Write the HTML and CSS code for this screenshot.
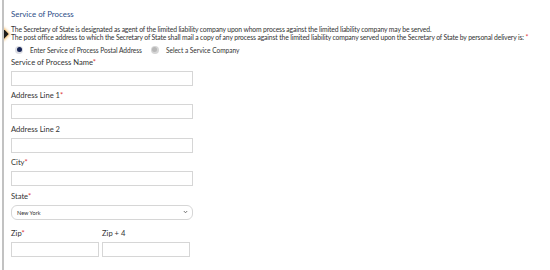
FILE: index.html
```html
<!DOCTYPE html>
<html>
<head>
<meta charset="utf-8">
<link rel="stylesheet" href="styles.css">
</head>
<body>
<div class="page">
  <div class="marker"></div>
  <section class="content">
    <h2 class="title">Service of Process</h2>
    <p class="desc">The Secretary of State is designated as agent of the limited liability company upon whom process against the limited liability company may be served.<br>The post office address to which the Secretary of State shall mail a copy of any process against the limited liability company served upon the Secretary of State by personal delivery is: <span class="req">*</span></p>
    <div class="radios">
      <label class="radio"><span class="dot on"></span>Enter Service of Process Postal Address</label>
      <label class="radio"><span class="dot"></span>Select a Service Company</label>
    </div>
    <div class="field">
      <div class="label">Service of Process Name<span class="req">*</span></div>
      <div class="input"></div>
    </div>
    <div class="field">
      <div class="label">Address Line 1<span class="req">*</span></div>
      <div class="input"></div>
    </div>
    <div class="field">
      <div class="label">Address Line 2</div>
      <div class="input"></div>
    </div>
    <div class="field">
      <div class="label">City<span class="req">*</span></div>
      <div class="input"></div>
    </div>
    <div class="field">
      <div class="label">State<span class="req">*</span></div>
      <div class="select"><span>New York</span>
        <svg width="5" height="4" viewBox="0 0 5 4"><path d="M0.8 1 L2.5 2.8 L4.2 1" fill="none" stroke="#555" stroke-width="0.8"/></svg>
      </div>
    </div>
    <div class="zips">
      <div class="field zip">
        <div class="label">Zip<span class="req">*</span></div>
        <div class="input"></div>
      </div>
      <div class="field zip">
        <div class="label">Zip + 4</div>
        <div class="input"></div>
      </div>
    </div>
  </section>
</div>
</body>
</html>
```
FILE: styles.css
```css
* { box-sizing: border-box; }
html, body { margin: 0; padding: 0; background: #fff; }
body { font-family: Lato, "Open Sans", sans-serif; color: #333; }
.page { position: relative; width: 550px; height: 270px; border-left: 2px solid #c2c2c2; margin-left: 2px; overflow: hidden; }
.marker { position: absolute; left: -5px; top: 30px; width: 8px; height: 8px; background: #1a1a1a; transform: rotate(45deg); box-shadow: 0 0 3px 1px #f3b45a; }
.content { padding: 8px 0 0 7px; }
.title { margin: 0; font-size: 7.9px; font-weight: 400; color: #2b4c86; line-height: 12px; }
.desc { margin: 6px 0 0; font-size: 6.8px; line-height: 7.5px; color: #333; white-space: nowrap; letter-spacing: -0.14px; }
.req { color: #e0393b; }
.radios { display: flex; gap: 9px; margin: 3px 0 0 4px; height: 11px; align-items: center; }
.radio { display: flex; align-items: center; font-size: 6.6px; color: #333; letter-spacing: -0.04px; }
.dot { width: 8px; height: 8px; border-radius: 50%; background: #d6d6d6; margin-right: 7px; position: relative; }
.dot::after { content: ""; position: absolute; left: 1.5px; top: 1.5px; width: 5px; height: 5px; border-radius: 50%; background: #b8b8b8; }
.dot.on { background: #dcdde3; }
.dot.on::after { background: #162455; }
.field { margin-top: 3px; }
.label { font-size: 7.6px; line-height: 9px; color: #333; }
.input { width: 182px; height: 15px; border: 1px solid #d6d6d6; margin-top: 4px; margin-bottom: 5.4px; }
.select { width: 182px; height: 15px; border: 1px solid #d6d6d6; border-radius: 6px; margin-top: 4px; display: flex; align-items: center; justify-content: space-between; padding: 0 4px 0 5px; font-size: 5.6px; color: #333; }
.zips { display: flex; gap: 3px; margin-top: 6px; }
.zip .input { width: 88px; }
```
